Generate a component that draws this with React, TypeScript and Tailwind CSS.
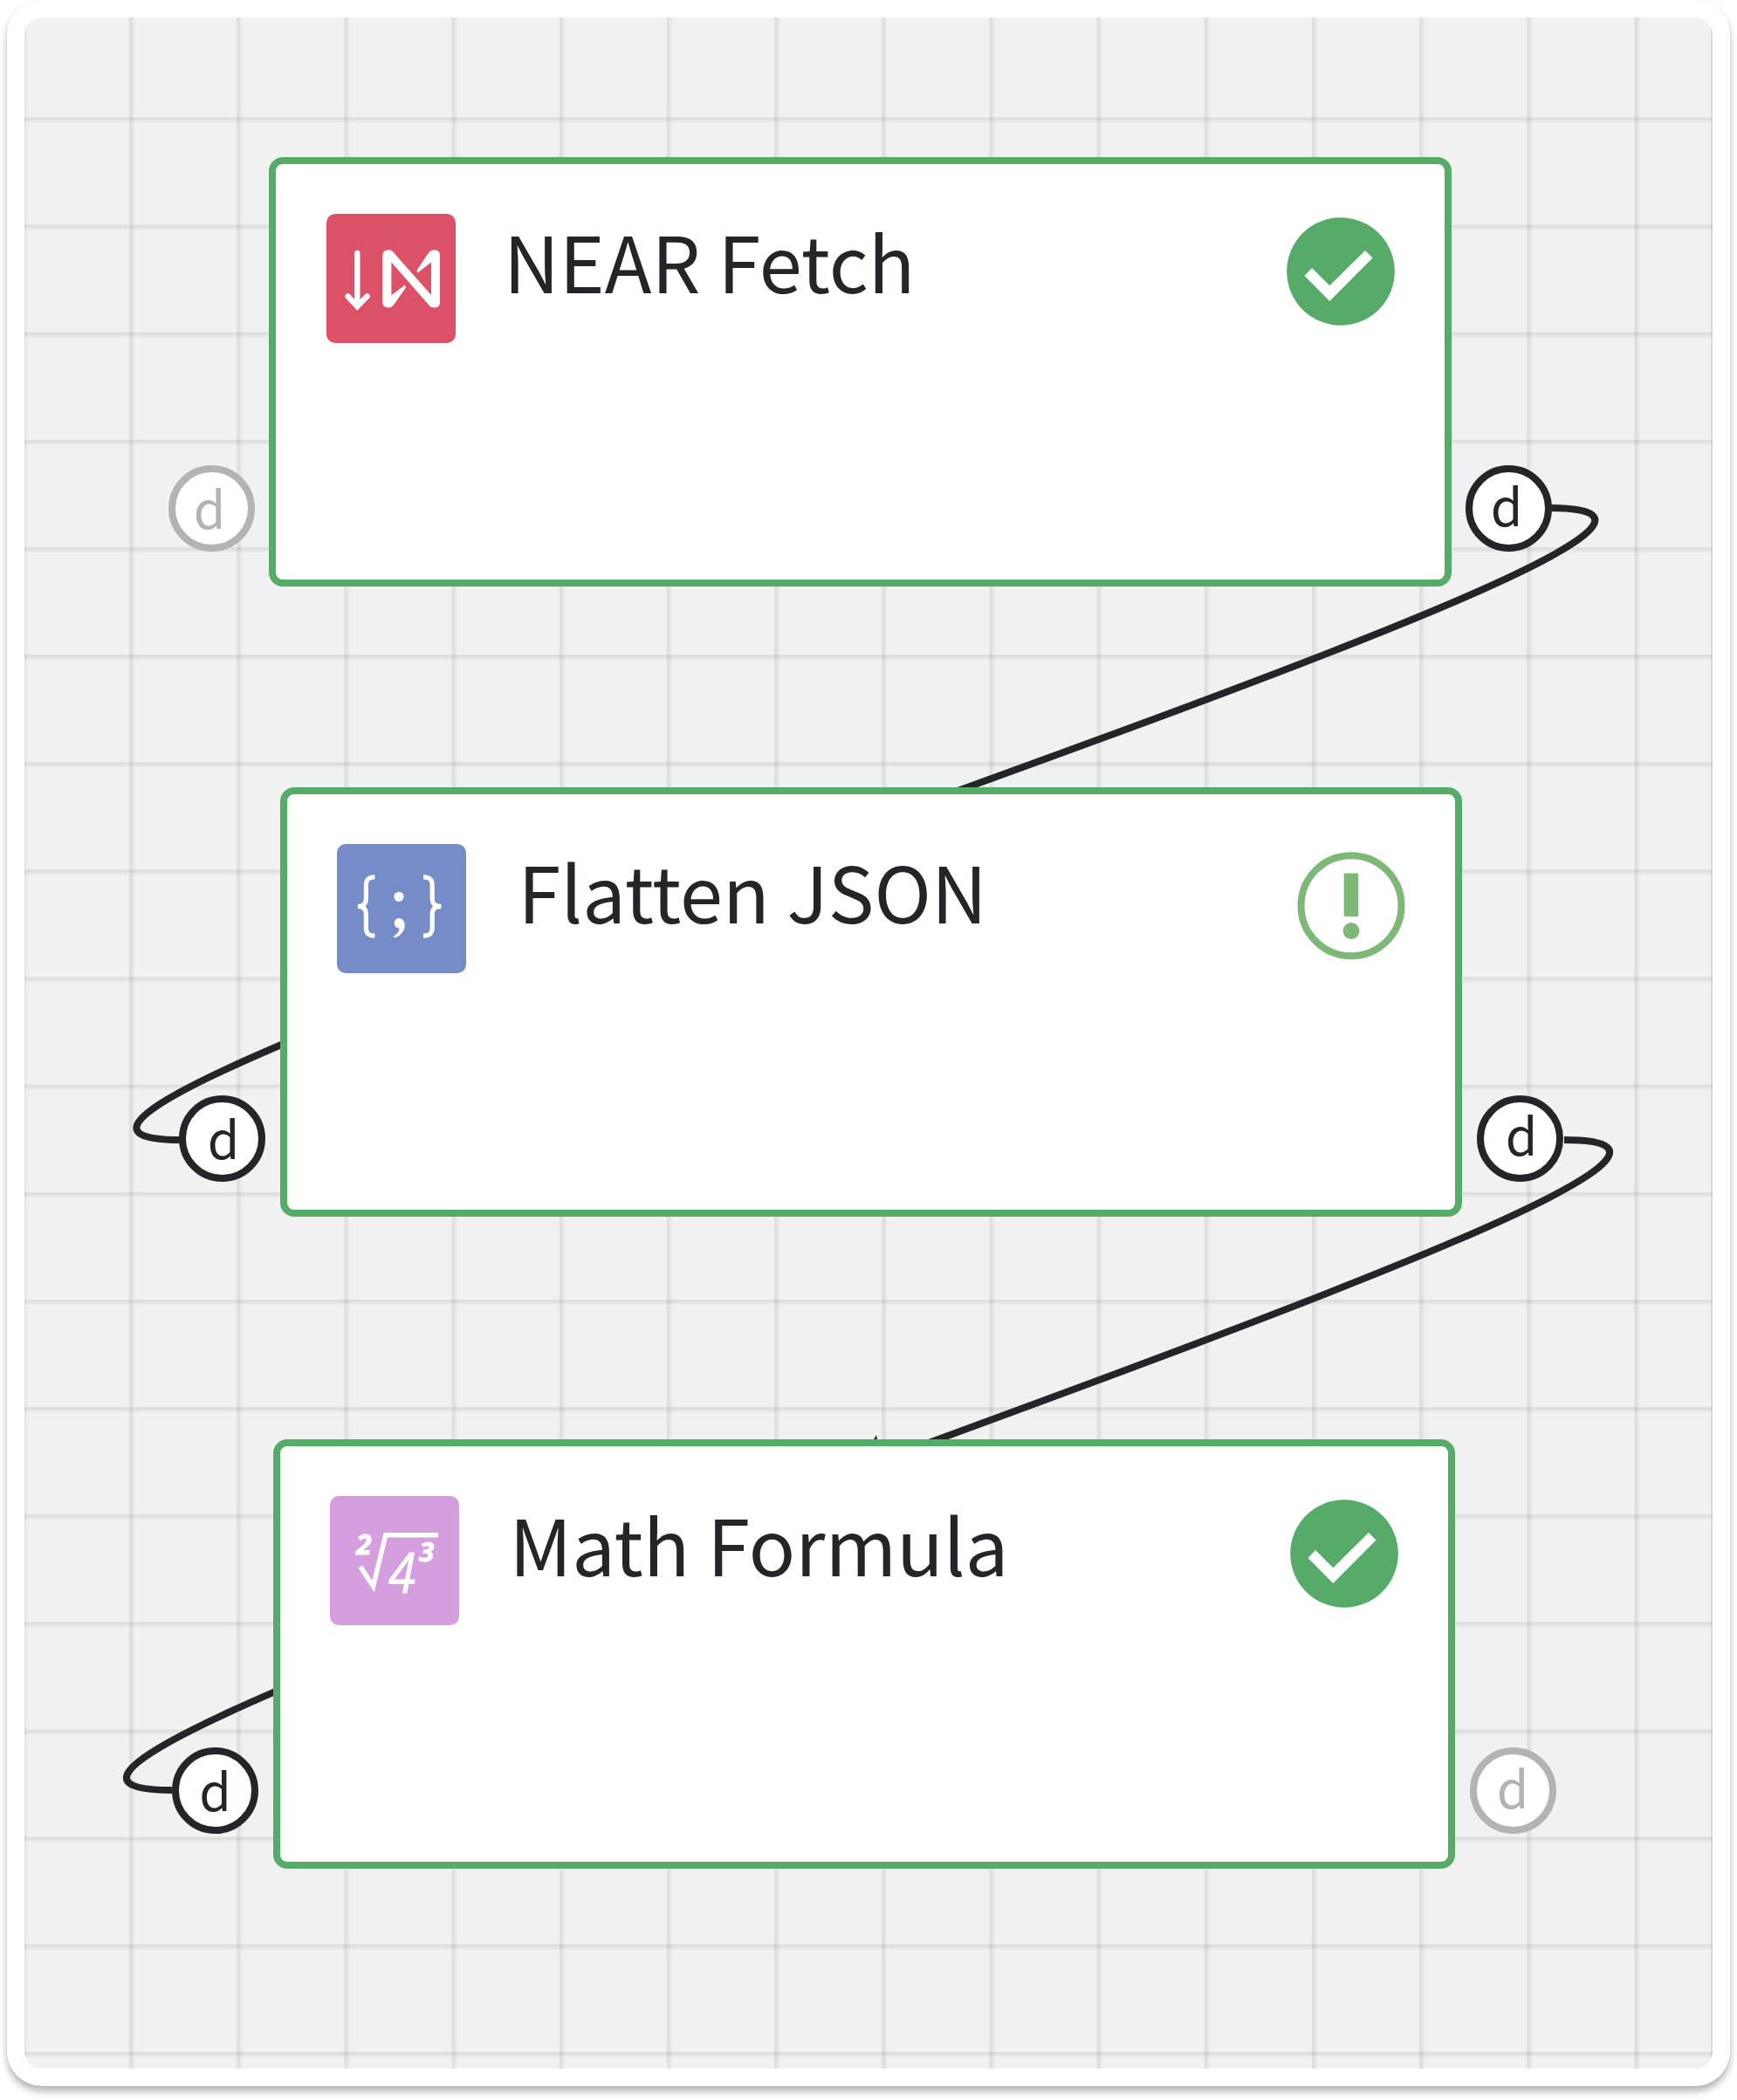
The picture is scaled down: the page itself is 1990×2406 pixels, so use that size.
import React from "react";

const INK = "#242529";
const GREEN = "#56ab68";

type PortProps = { glyph: string; muted?: boolean };

function Port({ glyph, muted }: PortProps) {
  return (
    <div
      className={`flex size-[99px] shrink-0 items-center justify-center rounded-full border-8 bg-white ${
        muted ? "border-[#b3b3b3] text-[#b3b3b3]" : "border-[#242529] text-[#242529]"
      } ${glyph}`}
    >
      <span className="text-[59px] leading-none">d</span>
    </div>
  );
}

function NearIcon() {
  return (
    <svg viewBox="0 0 148 148" className="size-full">
      <path
        d="M35.3 45V105M24.5 94.5L35.3 106L46.5 94.5"
        fill="none"
        stroke="#fff"
        strokeWidth="6.4"
        strokeLinecap="round"
      />
      <path
        fill="#fff"
        d="M64.3 48Q64.3 41.2 71 41.2Q75 41.2 78 45.5L104 75L120 93V55.5L104.5 67.5Q103 66.5 104 64L116 46Q119 41.2 124 41.2Q130 41.2 130 48V101Q130 107.5 124 107.5Q119 107.5 116 103L74.4 55.5V93.2L90 81.5Q91.5 83 90.5 85L78 103Q75 107.5 71 107.5Q64.3 107.5 64.3 101Z"
      />
    </svg>
  );
}

function JsonIcon() {
  return (
    <svg viewBox="0 0 148 148" className="size-full" fill="#fff">
      <g fill="none" stroke="#fff" strokeWidth="5.2">
        <path d="M43.4 37.8C36.5 38 33.4 40 33.4 47V62C33.4 68 31 71.4 24 71.4C31 71.4 33.4 75 33.4 81V96C33.4 103 36.5 105 43.4 105.2" />
        <path d="M99 37.8C106 38 109.2 40 109.2 47V62C109.2 68 111.6 71.4 119.4 71.4C111.6 71.4 109.2 75 109.2 81V96C109.2 103 106 105 99 105.2" />
      </g>
      <circle cx="71" cy="60.3" r="5.6" />
      <path d="M71 85C75 85 77.7 88 77.7 93C77.7 99.5 73.5 105 65.8 107.6L64.8 105.4C69 103.4 71.4 100.5 71.4 96.4C68 96.4 65.8 94 65.8 90.8C65.8 87.5 68 85 71 85Z" />
    </svg>
  );
}

function MathIcon() {
  return (
    <svg viewBox="0 0 148 148" className="size-full" fill="#fff">
      <path
        d="M34.8 81L49.6 103.5L63.8 44.8H124"
        fill="none"
        stroke="#fff"
        strokeWidth="5.4"
      />
      <g
        fontFamily="'Open Sans', sans-serif"
        fontStyle="italic"
        fontWeight="700"
        stroke="#fff"
      >
        <text x="30" y="67" fontSize="32" strokeWidth="1">2</text>
        <text
          x="67"
          y="111"
          fontSize="64"
          fontWeight="400"
          strokeWidth="0.9"
          textLength="31"
          lengthAdjust="spacingAndGlyphs"
        >
          4
        </text>
        <text x="102" y="75" fontSize="31" strokeWidth="1">3</text>
      </g>
    </svg>
  );
}

function Done() {
  return (
    <svg viewBox="0 0 124 124" className="size-[124px]">
      <circle cx="62" cy="62" r="61.8" fill={GREEN} />
      <path fill="#fff" d="M20.5 67L29 58L49.3 78.2L90 38L98.5 46.4L49.3 96Z" />
    </svg>
  );
}

function Warning() {
  return (
    <svg viewBox="0 0 124 124" className="size-[124px]" fill="#7eb877">
      <circle cx="62" cy="61.7" r="57.5" fill="none" stroke="#7eb877" strokeWidth="8" />
      <rect x="53.7" y="24.5" width="16.5" height="49.5" />
      <circle cx="62" cy="90.6" r="9.5" />
    </svg>
  );
}

type NodeProps = {
  title: string;
  place: string;
  tile: string;
  titleClass: string;
  statusClass: string;
  icon: React.ReactNode;
  status: React.ReactNode;
  children: React.ReactNode;
};

function FlowNode({ title, place, tile, titleClass, statusClass, icon, status, children }: NodeProps) {
  return (
    <section
      className={`absolute h-[492px] w-[1354.5px] rounded-[16px] border-8 border-[#56ab68] bg-white pr-[57px] pl-[57.5px] pt-[57px] ${place}`}
    >
      <header className="flex h-[148px] items-start">
        <div className={`size-[148px] shrink-0 overflow-hidden rounded-[10px] ${tile}`}>{icon}</div>
        <h2 className={`text-[88.3px] leading-[100px] whitespace-nowrap text-[#242529] ${titleClass}`}>{title}</h2>
        <div className={`ml-auto ${statusClass}`}>{status}</div>
      </header>
      <div className="-mr-[180.5px] -ml-[181px] mt-[139.5px] flex justify-between">{children}</div>
    </section>
  );
}

const columns = Array.from({ length: 16 }, (_, i) => -3.1 + i * 123.17);
const rows = Array.from({ length: 19 }, (_, i) => 114.3 + i * 123.14);

function Backdrop() {
  return (
    <svg viewBox="0 0 1954 2350" className="absolute inset-0 h-[2350px] w-[1954px]" fill="none">
      {columns.map((x) => (
        <g key={x} fill="#000">
          <rect x={x} y="0" width="3.6" height="2350" fillOpacity="0.075" />
          <rect x={x + 3.6} y="0" width="2.6" height="2350" fillOpacity="0.03" />
        </g>
      ))}
      {rows.map((y) => (
        <g key={y} fill="#000">
          <rect x="0" y={y} width="1934" height="3.6" fillOpacity="0.075" />
          <rect x="0" y={y + 3.6} width="1934" height="2.6" fillOpacity="0.03" />
        </g>
      ))}
      <rect x="1932" y="0" width="2" height="2350" fill="#000" fillOpacity="0.09" />
      <g stroke={INK} strokeWidth="8">
        <path d="M1747 562C2182 562 -252 1286 180 1286" />
        <path d="M1764 1286C2201 1286 -268 2031 169 2031" />
      </g>
      <path d="M952 1664L976 1624L984 1664Z" fill={INK} />
    </svg>
  );
}

export default function App() {
  return (
    <div className="h-[2406px] w-[1990px] overflow-hidden bg-white px-2 font-['Noto_Sans_CJK_SC',sans-serif]">
      <main className="h-[2390px] rounded-[40px] bg-white p-5 shadow-[0_6px_8px_rgba(0,0,0,0.3)]">
        <div className="relative h-full overflow-hidden rounded-[20px] bg-[#f1f1f1]">
          <Backdrop />
          <FlowNode
            title="NEAR Fetch"
            place="left-[280px] top-[160px]"
            tile="bg-[#dd5166]"
            titleClass="ml-[55.5px] mt-[3px]"
            statusClass="mt-[3.5px]"
            icon={<NearIcon />}
            status={<Done />}
          >
            <Port muted glyph="pr-[4px] pb-[4px]" />
            <Port glyph="pr-[5px] pb-[10px]" />
          </FlowNode>
          <FlowNode
            title="Flatten JSON"
            place="left-[292.5px] top-[882.2px]"
            tile="bg-[#768cc8]"
            titleClass="ml-[59.5px] mt-[2.5px]"
            statusClass="mt-[8.5px]"
            icon={<JsonIcon />}
            status={<Warning />}
          >
            <Port glyph="pl-[3px] pb-[4px]" />
            <Port glyph="pl-[4px] pb-[12px]" />
          </FlowNode>
          <FlowNode
            title="Math Formula"
            place="left-[284.5px] top-[1629.3px]"
            tile="bg-[#d59fdf]"
            titleClass="ml-[57.5px] mt-[3.5px]"
            statusClass="mt-1"
            icon={<MathIcon />}
            status={<Done />}
          >
            <Port glyph="pb-[3px]" />
            <Port muted glyph="pb-[9px]" />
          </FlowNode>
        </div>
      </main>
    </div>
  );
}
